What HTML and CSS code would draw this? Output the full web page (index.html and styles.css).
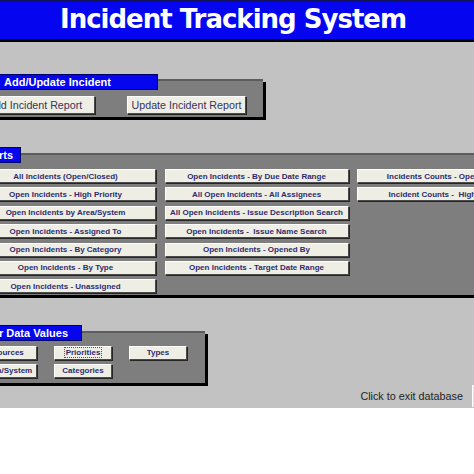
FILE: index.html
```html
<!DOCTYPE html>
<html>
<head>
<meta charset="utf-8">
<title>Incident Tracking System</title>
<link rel="stylesheet" href="styles.css">
</head>
<body>
<div class="screen">
  <div class="titlebar">Incident Tracking System</div>

  <div class="group group-add">
    <div class="tab tab-add">Add/Update Incident</div>
    <div class="panel panel-add">
      <div class="btn btn-lg">Add Incident Report</div>
      <div class="btn btn-lg btn-upd">Update Incident Report</div>
    </div>
  </div>

  <div class="group group-rep">
    <div class="tab tab-rep">Reports</div>
    <div class="panel panel-rep">
      <div class="rep-grid">
        <div class="col">
          <div class="btn btn-sm">All Incidents (Open/Closed)</div>
          <div class="btn btn-sm">Open Incidents - High Priority</div>
          <div class="btn btn-sm">Open Incidents by Area/System</div>
          <div class="btn btn-sm">Open Incidents - Assigned To</div>
          <div class="btn btn-sm">Open Incidents - By Category</div>
          <div class="btn btn-sm">Open Incidents - By Type</div>
          <div class="btn btn-sm">Open Incidents - Unassigned</div>
        </div>
        <div class="col">
          <div class="btn btn-sm">Open Incidents - By Due Date Range</div>
          <div class="btn btn-sm">All Open Incidents - All Assignees</div>
          <div class="btn btn-sm">All Open Incidents - Issue Description Search</div>
          <div class="btn btn-sm">Open Incidents -&nbsp; Issue Name Search</div>
          <div class="btn btn-sm">Open Incidents - Opened By</div>
          <div class="btn btn-sm">Open Incidents - Target Date Range</div>
        </div>
        <div class="col">
          <div class="btn btn-sm">Incidents Counts - Open/Closed</div>
          <div class="btn btn-sm">Incident Counts -&nbsp; High Priority</div>
        </div>
      </div>
    </div>
  </div>

  <div class="group group-data">
    <div class="tab tab-data">Other Data Values</div>
    <div class="panel panel-data">
      <div class="data-grid">
        <div class="btn btn-xs">Sources</div>
        <div class="btn btn-xs"><span class="focus">Priorities</span></div>
        <div class="btn btn-xs">Types</div>
        <div class="btn btn-xs">Area/System</div>
        <div class="btn btn-xs">Categories</div>
      </div>
    </div>
  </div>

  <div class="exit-row">
    <span class="exit-text">Click to exit database</span>
    <div class="exit-btn"></div>
  </div>
</div>
</body>
</html>
```

FILE: styles.css
```css
html, body {
  margin: 0;
  padding: 0;
  background: #ffffff;
  overflow: hidden;
}

.screen {
  width: 474px;
  height: 408px;
  overflow: hidden;
  background: #c2c2c2;
  font-family: "Liberation Sans", Arial, sans-serif;
}

.titlebar {
  height: 37px;
  line-height: 34px;
  background: #0505f0;
  border-top: 2px solid #14145a;
  border-bottom: 3px solid #000000;
  color: #ffffff;
  font-family: "DejaVu Sans", sans-serif;
  font-weight: bold;
  font-size: 26px;
  letter-spacing: -1px;
  text-align: center;
  padding-right: 8px;
  white-space: nowrap;
}

.group {
  margin-left: -40px;
}

.tab {
  position: relative;
  z-index: 1;
  box-sizing: border-box;
  height: 16px;
  line-height: 14px;
  background: #0505ee;
  border: 1px solid #00006a;
  color: #ffffff;
  font-weight: bold;
  font-size: 11px;
  white-space: nowrap;
  overflow: hidden;
}

.panel {
  box-sizing: border-box;
  background: #7e7e7e;
  border-top: 2px solid #5c5c5c;
  box-shadow: 3px 3px 0 #000000;
}

/* Add / Update */
.group-add { margin-top: 32px; }
.tab-add {
  margin-left: 37px;
  width: 161px;
  padding-left: 6px;
}
.panel-add {
  margin-top: -11px;
  width: 303px;
  height: 38px;
  padding: 15px 0 0 15px;
  display: flex;
  gap: 32px;
}

/* Reports */
.group-rep { margin-top: 30px; }
.tab-rep {
  width: 61px;
  text-align: right;
  padding-right: 7px;
}
.panel-rep {
  margin-top: -10px;
  width: 640px;
  height: 142px;
  padding: 14px 0 0 15px;
}
.rep-grid {
  display: grid;
  grid-template-columns: 181px 184px 181px;
  column-gap: 8.5px;
  align-items: start;
}
.col {
  display: flex;
  flex-direction: column;
  gap: 4.4px;
}

/* Data values */
.group-data { margin-top: 30px; }
.tab-data {
  margin-left: 12px;
  width: 110px;
  text-align: right;
  padding-right: 13px;
}
.panel-data {
  margin-top: -10px;
  width: 245px;
  height: 52px;
  padding: 13px 0 0 19px;
}
.data-grid {
  display: grid;
  grid-template-columns: 58px 58px 58px;
  column-gap: 17px;
  row-gap: 4.5px;
}

/* Buttons */
.btn {
  box-sizing: border-box;
  background: #efeee4;
  border-top: 1px solid #ffffff;
  border-left: 1px solid #ffffff;
  border-right: 1px solid #4a4a4a;
  border-bottom: 1px solid #4a4a4a;
  box-shadow: 1px 1px 0 #262626;
  text-align: center;
  white-space: nowrap;
  overflow: hidden;
  display: flex;
  align-items: center;
  justify-content: center;
}
.btn-lg {
  width: 120px;
  height: 18px;
  font-size: 10.7px;
  color: #34345e;
}
.btn-upd { width: 119px; }
.btn-sm {
  height: 14px;
  font-size: 8px;
  font-weight: bold;
  color: #2c2c6e;
}
.btn-xs {
  height: 13.5px;
  font-size: 8px;
  font-weight: bold;
  color: #2c2c6e;
}
.focus {
  border: 1px dotted #555555;
  padding: 0 1px;
  line-height: 9px;
}

/* Exit */
.exit-row {
  margin-top: 2px;
  height: 22px;
  display: flex;
  align-items: center;
  justify-content: flex-end;
  gap: 9px;
  margin-right: -58px;
}
.exit-text {
  font-size: 10.8px;
  color: #222222;
  white-space: nowrap;
}
.exit-btn {
  width: 60px;
  height: 22px;
  box-sizing: border-box;
  background: #e2e2e2;
  border-left: 1px solid #ffffff;
  border-top: 1px solid #ffffff;
}
```
